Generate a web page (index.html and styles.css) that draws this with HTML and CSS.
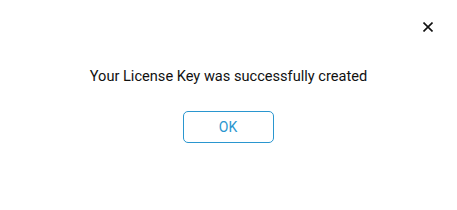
FILE: index.html
```html
<!DOCTYPE html>
<html lang="en">
<head>
    <meta charset="UTF-8">
    <meta name="viewport" content="width=device-width, initial-scale=1.0">
    <title>License Key</title>
    <link rel="stylesheet" href="styles.css">
</head>
<body>
    <div class="dialog">
        <!-- Botão de fechar -->
        <button class="close" aria-label="Close">
            <svg width="10" height="10" viewBox="0 0 10 10">
                <path d="M0.5 0.5 L9.5 9.5 M9.5 0.5 L0.5 9.5" stroke="#111" stroke-width="1.6" fill="none"/>
            </svg>
        </button>

        <p class="message">Your License Key was successfully created</p>

        <div class="actions">
            <button class="btn-ok">OK</button>
        </div>
    </div>
</body>
</html>
```

FILE: styles.css
```css
* {
    margin: 0;
    padding: 0;
    box-sizing: border-box;
}

body {
    font-family: Roboto, "Noto Sans", sans-serif;
    background: #fff;
    color: #111;
}

.dialog {
    position: relative;
    width: 457px;
    height: 210px;
    padding-top: 66px;
}

.close {
    position: absolute;
    top: 22px;
    left: 423px;
    width: 10px;
    height: 10px;
    border: none;
    background: none;
    display: flex;
    cursor: pointer;
}

.message {
    text-align: center;
    font-size: 14.6px;
    line-height: 20px;
}

.actions {
    display: flex;
    justify-content: center;
    margin-top: 25px;
}

.btn-ok {
    width: 91px;
    height: 32px;
    margin-left: -1px;
    font-family: Roboto, sans-serif;
    font-size: 14px;
    color: #2a96cf;
    background: #fff;
    border: 1px solid #2a96cf;
    border-radius: 5px;
    cursor: pointer;
}
```
